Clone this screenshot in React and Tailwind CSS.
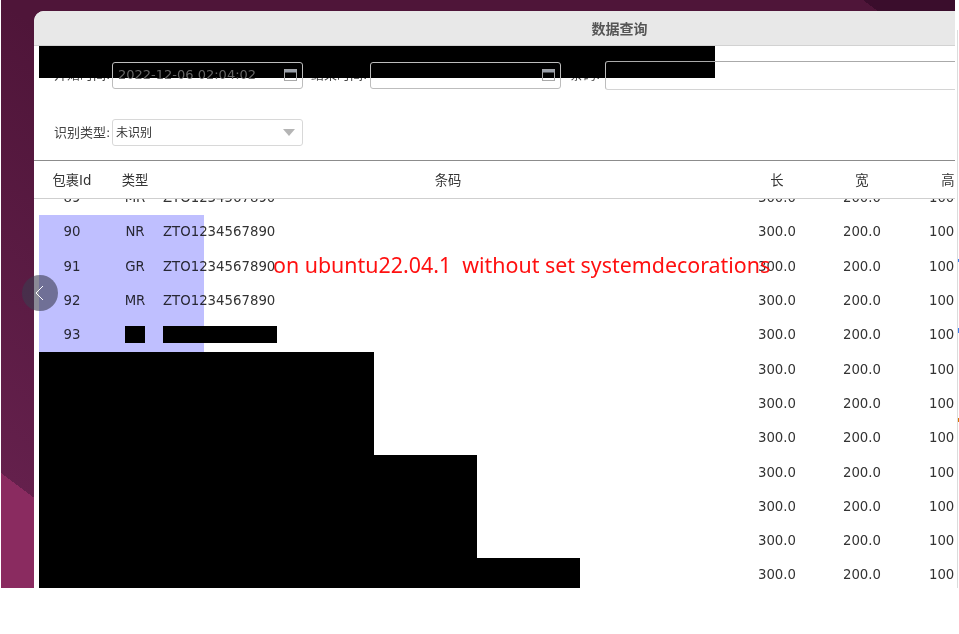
const rows = [89, 90, 91, 92, 93, 94, 95, 96, 97, 98, 99, 100];
const types = { 89: "MR", 90: "NR", 91: "GR", 92: "MR" };
const grid = "grid grid-cols-[66px_60px_566px_92px_78px_94px]";

function CalendarIcon() {
  return (
    <svg width="14" height="14" viewBox="0 0 14 14" className="shrink-0">
      <rect x="0.5" y="1.5" width="12" height="11" fill="none" stroke="#a8a8a8" />
      <rect x="0.5" y="1.5" width="12" height="3" fill="#9aa0aa" />
    </svg>
  );
}

function DateInput({ value }) {
  return (
    <div className="relative z-10 w-[191px] h-[27px] flex items-center justify-between pl-[5px] pr-[4px] border border-[#bdbdbd] rounded-[3px] text-[13px] text-[#666]">
      <span className="-mt-px">{value}</span>
      <CalendarIcon />
    </div>
  );
}

export default function App() {
  return (
    <div className="relative w-[959px] h-[634px] overflow-hidden bg-white font-['DejaVu_Sans','Noto_Sans_CJK_SC',sans-serif]">
      <div className="w-[954px] h-[588px] ml-px pt-[11px] pl-[33px] bg-[linear-gradient(217deg,#3a0d2c_0%,#3a0d2c_5.3%,#4f1539_5.3%,#4f1539_55%,#64204c_91.2%,#8a2b60_91.2%,#8a2b60_100%)]">
        <div className="w-[921px] h-[577px] rounded-tl-[10px] overflow-hidden bg-white flex flex-col">
          <div className="h-[35px] shrink-0 pl-[250px] pt-[3px] flex items-center justify-center bg-[#e8e8e8] border-b border-[#d2d2d2] text-[14px] font-bold text-[#555]">
            数据查询
          </div>

          <div className="h-[115px] shrink-0 pl-[20px] pt-[15px] flex flex-col gap-[29px] text-[13px] text-[#444] border-b border-[#8c8c8c]">
            <div className="flex items-center gap-px h-[28px]">
              <span className="w-[57px]">开始时间:</span>
              <DateInput value="2022-12-06 02:04:02" />
              <span className="ml-[7px] w-[58px]">结束时间:</span>
              <DateInput value="" />
              <span className="ml-[8px] w-[34px]">条码:</span>
              <div className="relative z-10 h-[29px] flex-1 border-y border-l border-t-[#aaaaaa] border-b-[#d4d4d4] border-l-[#bdbdbd] rounded-l-[3px]" />
            </div>
            <div className="flex items-center gap-px h-[28px]">
              <span className="w-[57px] pt-px">识别类型:</span>
              <div className="w-[191px] h-[27px] flex items-center justify-between pl-[3px] pr-[7px] border border-[#d8d8d8] rounded-[3px] text-[12px] text-[#333]">
                <span className="pt-[2px]">未识别</span>
                <span className="w-0 h-0 border-x-[6px] border-x-transparent border-t-[7px] border-t-[#b5b5b5]" />
              </div>
            </div>
          </div>

          <div className="flex-1 min-h-0 flex flex-col text-[13.3px] text-[#333]">
            <div className={`${grid} h-[38px] shrink-0 pt-[3px] pl-[5px] items-center text-center border-b border-[#cfcfcf]`}>
              <span>包裹Id</span>
              <span>类型</span>
              <span>条码</span>
              <span>长</span>
              <span>宽</span>
              <span>高</span>
            </div>
            <div className="flex-1 min-h-0 pl-[5px] overflow-hidden">
              <div className="-mt-[18px]">
                {rows.map((id) => (
                  <div key={id} className={`${grid} h-[34.3px] items-center text-center`}>
                    <span>{id}</span>
                    <span>{types[id] || "MR"}</span>
                    <span className="text-left -ml-[2px]">ZTO1234567890</span>
                    <span>300.0</span>
                    <span>200.0</span>
                    <span>100.0</span>
                  </div>
                ))}
              </div>
            </div>
          </div>
        </div>
      </div>

      {/* right edge of the captured image */}
      <div className="absolute left-[957px] top-[30px] w-px h-[558px] bg-[#dcdcdc]" />
      <div className="absolute left-[958px] top-[259px] w-px h-[3px] bg-[#3b82f6]" />
      <div className="absolute left-[958px] top-[328px] w-px h-[5px] bg-[#3b82f6]" />
      <div className="absolute left-[958px] top-[418px] w-px h-[4px] bg-[#d97706]" />

      {/* selection tint over the first cells */}
      <div className="absolute left-[39px] top-[215px] w-[165px] h-[137px] bg-[#0000ff]/25 mix-blend-multiply" />

      {/* redactions */}
      <div className="absolute z-0 left-[39px] top-[46px] w-[676px] h-[32px] bg-black" />
      <div className="absolute left-[125px] top-[326px] w-[20px] h-[17px] bg-black" />
      <div className="absolute left-[163px] top-[326px] w-[114px] h-[17px] bg-black" />
      <div className="absolute left-[39px] top-[352px] w-[335px] h-[236px] bg-black" />
      <div className="absolute left-[374px] top-[455px] w-[103px] h-[133px] bg-black" />
      <div className="absolute left-[477px] top-[558px] w-[103px] h-[30px] bg-black" />

      {/* annotation */}
      <div className="absolute left-[273px] top-[251px] font-['Noto_Sans',sans-serif] text-[21.4px] leading-[28px] whitespace-pre text-[#ff1010]">
        on ubuntu22.04.1  without set systemdecorations
      </div>

      {/* back arrow */}
      <div className="absolute z-20 left-[22px] top-[275px] w-[36px] h-[36px] rounded-full bg-[#3c3c50]/60 flex items-center justify-center">
        <svg width="12" height="18" viewBox="0 0 12 18" fill="none" stroke="#fff" strokeWidth="1">
          <path d="M9 2 L2 9 L9 16" />
        </svg>
      </div>
    </div>
  );
}
